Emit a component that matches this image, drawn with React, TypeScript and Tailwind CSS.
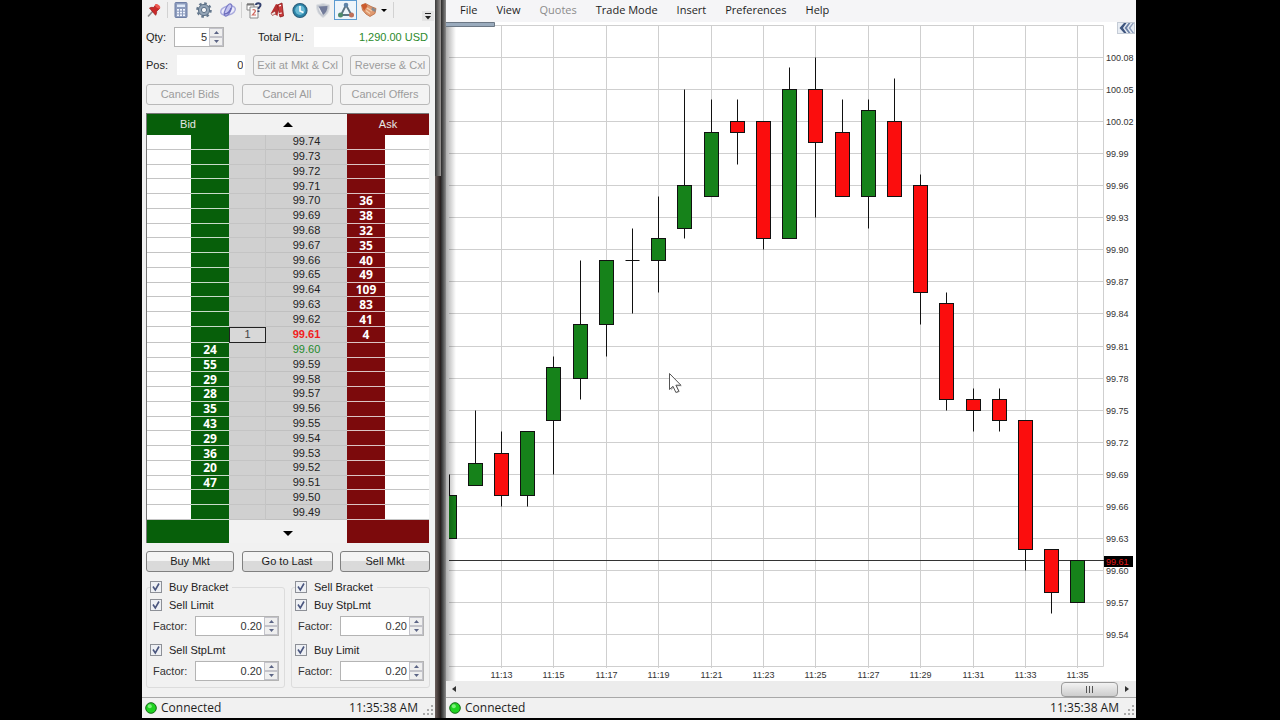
import { ReactNode, useState } from 'react'
import clsx from 'clsx'

type Level = { price: string; bid?: number; ask?: number; working?: number }

const bidSizes: Record<string, number> = {
  '99.60': 24, '99.59': 55, '99.58': 29, '99.57': 28, '99.56': 35,
  '99.55': 43, '99.54': 29, '99.53': 36, '99.52': 20, '99.51': 47,
}
const askSizes: Record<string, number> = {
  '99.70': 36, '99.69': 38, '99.68': 32, '99.67': 35, '99.66': 40,
  '99.65': 49, '99.64': 109, '99.63': 83, '99.62': 41, '99.61': 4,
}

const levels: Level[] = Array.from({ length: 26 }, (_, i) => {
  const price = ((9974 - i) / 100).toFixed(2)
  return { price, bid: bidSizes[price], ask: askSizes[price], working: price === '99.61' ? 1 : undefined }
})

// [minute after 11:00, open, high, low, close] in hundredths
const candles = [
  [11, 9963, 9969, 9963, 9967],
  [12, 9968, 9975, 9968, 9970],
  [13, 9971, 9973, 9966, 9967],
  [14, 9967, 9973, 9966, 9973],
  [15, 9974, 9980, 9969, 9979],
  [16, 9978, 9989, 9976, 9983],
  [17, 9983, 9989, 9980, 9989],
  [18, 9989, 9992, 9984, 9989],
  [19, 9989, 9995, 9986, 9991],
  [20, 9992, 10005, 9991, 9996],
  [21, 9995, 10004, 9995, 10001],
  [22, 10002, 10004, 9998, 10001],
  [23, 10002, 10002, 9990, 9991],
  [24, 9991, 10007, 9991, 10005],
  [25, 10005, 10008, 9993, 10000],
  [26, 10001, 10004, 9995, 9995],
  [27, 9995, 10004, 9992, 10003],
  [28, 10002, 10006, 9995, 9995],
  [29, 9996, 9997, 9983, 9986],
  [30, 9985, 9986, 9975, 9976],
  [31, 9976, 9977, 9973, 9975],
  [32, 9976, 9977, 9973, 9974],
  [33, 9974, 9974, 9960, 9962],
  [34, 9962, 9962, 9956, 9958],
  [35, 9957, 9961, 9957, 9961],
]

const PLOT = { left: 3, right: 658, top: 3, bottom: 644 }
const xOf = (minute: number) => Math.round(55 + (minute - 13) * 26.2) + 0.5
const yOf = (price: number) => Math.round(34.6 + (10008 - price) * 10.7) + 0.5

function Icon({ children }: { children: ReactNode }) {
  return (
    <svg viewBox="0 0 18 18" className="size-[18px]" aria-hidden="true">
      {children}
    </svg>
  )
}

const icons: Record<string, ReactNode> = {
  pin: (
    <Icon>
      <path d="M3 15.500 8 10" stroke="#8b8b8b" strokeWidth="1.600" />
      <path d="M4.500 7c2-1 3-.6 4-.4L11 3.500l4 3.600-3.400 3.200c.2 1.600-.2 2.800-1 4z" fill="#c92a2a" stroke="#a01d1d" strokeWidth=".8" />
      <path d="M10 3.500c1.500-2 6.500 1.500 5 4-1.500 1-5.600-2-5-4z" fill="#ee5a52" />
    </Icon>
  ),
  calculator: (
    <Icon>
      <rect x="3" y="1.500" width="12" height="15" rx="1" fill="#8d9cbd" stroke="#6f7fa6" />
      <rect x="5" y="3.500" width="8" height="2.500" fill="#dfe9f8" />
      {[8, 10.7, 13.4].map((y) =>
        [5, 8, 11].map((x) => <rect key={`${x}-${y}`} x={x} y={y} width="2" height="1.700" fill="#f1f5ff" />),
      )}
    </Icon>
  ),
  gear: (
    <Icon>
      <circle cx="9" cy="9" r="6.600" fill="none" stroke="#65788d" strokeWidth="2.400" strokeDasharray="2.600 2.580" />
      <circle cx="9" cy="9" r="5.600" fill="#93a4b6" stroke="#5c7086" />
      <circle cx="9" cy="9" r="2.600" fill="#f4f5f7" stroke="#5c7086" />
    </Icon>
  ),
  swirl: (
    <Icon>
      <ellipse cx="9" cy="9.500" rx="7.500" ry="4.500" fill="#ececfb" stroke="#a9aadd" strokeWidth="1.500" transform="rotate(-15 9 9.500)" />
      <ellipse cx="9" cy="9" rx="2.600" ry="6.500" fill="#c4c4f0" stroke="#7b7cc6" strokeWidth="1.300" transform="rotate(25 9 9)" />
      <path d="M5 13c3 0 6-2 7-6" fill="none" stroke="#6a6bbb" strokeWidth="1.400" />
    </Icon>
  ),
  calendar: (
    <Icon>
      <path d="M2 3h7v6H2z" fill="#fff" stroke="#888" />
      <path d="M2 2.500h7v2H2z" fill="#777" />
      <path d="M5 6h8v11H5z" fill="#fafafa" stroke="#888" />
      <path d="M7.500 9c2-1 3.500.5 2.500 2l-2.500 3h3.500" fill="none" stroke="#d0685f" strokeWidth="1.200" />
      <path d="M11 4c0-2.500 4.500-2.500 4.500 0S13.500 5.500 13.500 8M13.500 9.500v1.500" fill="none" stroke="#33416e" strokeWidth="2" />
    </Icon>
  ),
  books: (
    <Icon>
      <path d="m3 12 5-9 3 1-1.500 11-3-2z" fill="#b63030" />
      <path d="m9.500 4 4.500-2 1.500 13-3.500 1z" fill="#c93c3c" stroke="#8a1717" strokeWidth=".8" />
      <path d="M3 12.500 7 10l1 2.500-3.500 2z" fill="#f2e3df" stroke="#8a1717" strokeWidth=".6" />
      <path d="m11 5 2-.6M11.300 12.500l2.500-.5" stroke="#fff" strokeWidth="1.200" />
    </Icon>
  ),
  clock: (
    <Icon>
      <circle cx="9" cy="9.500" r="7" fill="#2b84a8" stroke="#2d5f7c" strokeWidth="1.200" />
      <circle cx="9" cy="9.200" r="4.800" fill="#69b9d4" />
      <path d="M9 5v5l3.500 1.500" fill="none" stroke="#fff" strokeWidth="1.600" />
    </Icon>
  ),
  shield: (
    <Icon>
      <path d="M2.500 4 9 2.500 15.500 4c0 6-2 10-6.500 12.500C4.500 14 2.500 10 2.500 4z" fill="#c6cad1" stroke="#dcdfe3" />
      <path d="M4.500 5.500 13.500 5c0 4-1.500 7-4.500 9z" fill="#727b9a" />
      <path d="M4.500 5.500 9 14c-3-2-4.500-5-4.500-8.500z" fill="#e9ebef" />
    </Icon>
  ),
  network: (
    <Icon>
      <path d="M9 4 4 14h10.500z" fill="none" stroke="#5d7483" strokeWidth="1.900" />
      <circle cx="9" cy="4" r="2.300" fill="#5e83a8" />
      <circle cx="3.500" cy="14" r="2.500" fill="#4f8a6a" />
      <circle cx="14.500" cy="14" r="2.500" fill="#c0705a" />
    </Icon>
  ),
  hands: (
    <Icon>
      <path d="m1.500 4 4-1.500 5.500 3 5 2-1 5-5 3-4-2.500-3.500-4z" fill="#e09a70" stroke="#b9673c" strokeWidth=".8" />
      <path d="m1.500 4 4-1.500 2 2.500L4 10z" fill="#cc5a2c" />
      <path d="m7 7 5 3M6 9.500l4 3" stroke="#f6cfae" strokeWidth="1.200" />
      <path d="m12 6 4 2.500-1 2.500-3.500-2z" fill="#85898f" />
    </Icon>
  ),
}

function ToolButton({ name, active }: { name: string; active?: boolean }) {
  return (
    <button
      aria-label={name}
      className={clsx('flex h-5 w-[23px] items-center justify-center border', active ? 'border-[#5c9bd1] bg-[#eef5fb]' : 'border-transparent')}
    >
      {icons[name]}
    </button>
  )
}

function Separator() {
  return <span className="h-4 w-px bg-[#d2d2d2]" />
}

function PushButton({ children, disabled, className }: { children: ReactNode; disabled?: boolean; className?: string }) {
  return (
    <button
      disabled={disabled}
      className={clsx(
        'h-[21px] whitespace-nowrap rounded-[3px] border text-[11px]',
        disabled ? 'border-[#b9b9b9] bg-[#f3f3f3] text-[#9c9c9c]' : 'border-[#808080] bg-linear-to-b from-[#f4f4f4] from-50% to-[#dadada] to-50% text-[#1c1c1c]',
        className,
      )}
    >
      {children}
    </button>
  )
}

function Spinner({ id, initial, className }: { id: string; initial: string; className?: string }) {
  const [value, setValue] = useState(initial)
  const step = initial.includes('.') ? 0.01 : 1
  const bump = (dir: number) => setValue((Number(value) + dir * step).toFixed(step < 1 ? 2 : 0))

  return (
    <div className={clsx('flex h-5 border border-[#b4b4b4] bg-white', className)}>
      <input id={id} value={value} onChange={(e) => setValue(e.target.value)} className="w-0 min-w-0 flex-1 bg-white pr-0.5 text-right text-[11px] leading-4 text-[#333]" />
      <div className="flex w-3.5 flex-col">
        {[1, -1].map((dir) => (
          <button key={dir} aria-label={dir > 0 ? 'Increase' : 'Decrease'} onClick={() => bump(dir)} className="flex flex-1 items-center justify-center border border-[#c3c3ca] bg-[#efefef]">
            <svg viewBox="0 0 5 3" className="h-[3px] w-[5px]">
              <path d={dir > 0 ? 'M0 3 2.500 0 5 3z' : 'M0 0 2.500 3 5 0z'} fill="#5b6485" />
            </svg>
          </button>
        ))}
      </div>
    </div>
  )
}

function Check({ label }: { label: string }) {
  return (
    <label className="flex h-3.5 items-center gap-[7px] text-[11px] leading-[14px] text-[#222]">
      <span className="grid size-3 shrink-0">
        <input type="checkbox" defaultChecked className="peer size-3 appearance-none border border-[#8d9097] bg-[#eef0f4] [grid-area:1/1]" />
        <svg viewBox="0 0 12 12" className="pointer-events-none invisible size-3 [grid-area:1/1] peer-checked:visible">
          <path d="m3 5.500 2.300 3.500L9 2.500" fill="none" stroke="#4a567f" strokeWidth="1.600" />
        </svg>
      </span>
      {label}
    </label>
  )
}

function Factor({ id }: { id: string }) {
  return (
    <div className="mt-1 flex items-center pl-[3px]">
      <label htmlFor={id} className="w-[42px] text-[11px] text-[#333]">Factor:</label>
      <Spinner id={id} initial="0.20" className="w-[84px]" />
    </div>
  )
}

function Bracket({ id, labels }: { id: string; labels: string[] }) {
  return (
    <fieldset className="w-[139px] rounded-[3px] border border-[#dcdcdc] pb-1.5 pl-[3px]">
      <legend className="h-3.5 pr-1"><Check label={labels[0]} /></legend>
      <div className="mt-1"><Check label={labels[1]} /></div>
      <Factor id={`${id}-first`} />
      <div className="mt-[7px]"><Check label={labels[2]} /></div>
      <Factor id={`${id}-second`} />
    </fieldset>
  )
}

function StatusBar() {
  return (
    <footer className="flex h-[21px] items-center border-t border-[#a8a8a8] bg-[#f1f1f1] pl-[3px] font-['Open_Sans','Noto_Sans',sans-serif] text-[12px] leading-4 text-[#1e1e1e]">
      <svg viewBox="0 0 12 12" className="size-3">
        <circle cx="6" cy="6" r="5.300" fill="#1fd321" stroke="#146b16" />
        <circle cx="4.800" cy="4.300" r="2" fill="#7df27a" />
      </svg>
      <span className="ml-1">Connected</span>
      <span className="ml-auto">11:35:38 AM</span>
      <svg viewBox="0 0 12 12" className="ml-1 mr-px mt-1 size-3">
        {[[9, 1], [5, 5], [9, 5], [1, 9], [5, 9], [9, 9]].map(([x, y]) => (
          <rect key={`${x}-${y}`} x={x} y={y} width="2" height="2" fill="#aaa" />
        ))}
      </svg>
    </footer>
  )
}

function Ladder() {
  return (
    <div className="mt-2 pr-px">
      <table className="h-[430px] w-full table-fixed border-separate border-spacing-0 border-l border-t border-[#777] text-center text-[11px] leading-[13px]">
        <colgroup>
          <col className="w-11" />
          <col className="w-[38px]" />
          <col className="w-[37px]" />
          <col />
          <col className="w-[38px]" />
          <col className="w-11" />
        </colgroup>
        <thead>
          <tr className="h-[21px] text-[#e6e6e6]">
            <th colSpan={2} className="bg-[#075f0a] p-0 text-[11px] font-normal">Bid</th>
            <th colSpan={2} className="bg-[#f2f2f2] p-0">
              <button aria-label="Scroll up" className="block w-full">
                <svg viewBox="0 0 10 5" className="mx-auto h-[5px] w-2.5"><path d="M0 5 5 0l5 5z" /></svg>
              </button>
            </th>
            <th colSpan={2} className="bg-[#7c0a0c] p-0 text-[11px] font-normal">Ask</th>
          </tr>
        </thead>
        <tbody>
          {levels.map(({ price, bid, ask, working }) => (
            <tr key={price}>
              <td className="border-b border-[#c4c4c4] bg-white p-0" />
              <td className="border-b border-[#c9dcc9] bg-[#075f0a] p-0 font-['Open_Sans',sans-serif] text-[12px] font-bold text-white">{bid}</td>
              <td className={clsx('p-0 text-[#444]', working ? 'border border-[#222] bg-[#d8d8d8]' : 'border-b border-r border-[#c4c4c4] bg-[#d0d0d0]')}>{working}</td>
              <td
                className={clsx(
                  'border-b border-[#c0c0c0] bg-[#d0d0d0] p-0',
                  price === '99.61' ? 'font-bold text-[#f02020]' : price === '99.60' ? 'text-[#1f8a2b]' : 'text-[#222]',
                )}
              >
                {price}
              </td>
              <td className="border-b border-[#dcc4c4] bg-[#7c0a0c] p-0 font-['Open_Sans',sans-serif] text-[12px] font-bold text-white">{ask}</td>
              <td className="border-b border-[#c4c4c4] bg-white p-0" />
            </tr>
          ))}
        </tbody>
        <tfoot>
          <tr className="h-[23px]">
            <td colSpan={2} className="bg-[#075f0a] p-0" />
            <td colSpan={2} className="bg-[#f2f2f2] p-0 pt-1">
              <button aria-label="Scroll down" className="block w-full">
                <svg viewBox="0 0 10 5" className="mx-auto h-[5px] w-2.5"><path d="m0 0 5 5 5-5z" /></svg>
              </button>
            </td>
            <td colSpan={2} className="bg-[#7c0a0c] p-0" />
          </tr>
        </tfoot>
      </table>
    </div>
  )
}

function OrderTicket() {
  return (
    <section className="flex w-[293px] shrink-0 flex-col bg-[#f1f1f1]">
      <div className="flex h-6 items-start justify-between pr-px">
        <div className="flex h-5 items-center">
          <ToolButton name="pin" />
          <span className="ml-0.5 mr-px flex"><Separator /></span>
          <ToolButton name="calculator" />
          <ToolButton name="gear" />
          <span className="ml-px flex"><ToolButton name="swirl" /></span>
          <span className="ml-0.5 flex"><Separator /></span>
          <ToolButton name="calendar" />
          <ToolButton name="books" />
          <ToolButton name="clock" />
          <ToolButton name="shield" />
          <ToolButton name="network" active />
          <ToolButton name="hands" />
          <button aria-label="More actions" className="pl-px pr-1.5">
            <svg viewBox="0 0 6 3" className="h-[3px] w-1.5"><path d="m0 0 3 3 3-3z" /></svg>
          </button>
          <Separator />
        </div>
        <button aria-label="Toolbar options" className="mt-[11px] h-2.5 w-3 bg-[#e4e4e4]">
          <svg viewBox="0 0 12 10" className="size-full"><path d="M3 2.500h6" stroke="#222" /><path d="m3 5 3 3.500L9 5z" fill="#222" /></svg>
        </button>
      </div>
      <div className="flex flex-1 flex-col pl-1 pr-[5px] pt-[3px]">
        <div className="flex h-5 items-center text-[#222]">
          <label htmlFor="qty" className="w-7 text-[11px]">Qty:</label>
          <Spinner id="qty" initial="5" className="w-[50px]" />
          <label htmlFor="pl" className="ml-auto w-14 text-[11px]">Total P/L:</label>
          <input id="pl" readOnly value="1,290.00 USD" className="h-5 w-[116px] bg-white pr-0.5 text-right text-[11px] text-[#2b8a2b]" />
        </div>
        <div className="mt-2 flex h-[21px] items-center justify-between">
          <label htmlFor="pos" className="w-6 text-[11px] text-[#222]">Pos:</label>
          <input id="pos" readOnly value="0" className="h-5 w-[68px] self-start bg-white pr-0.5 text-right text-[11px] text-[#333]" />
          <PushButton disabled className="w-[90px]">Exit at Mkt &amp; Cxl</PushButton>
          <PushButton disabled className="w-20">Reverse &amp; Cxl</PushButton>
        </div>
        <div className="mt-2 flex justify-between">
          <PushButton disabled className="w-[88px]">Cancel Bids</PushButton>
          <PushButton disabled className="w-[91px]">Cancel All</PushButton>
          <PushButton disabled className="w-[90px]">Cancel Offers</PushButton>
        </div>
        <Ladder />
        <div className="mt-2 flex justify-between">
          <PushButton className="w-[88px]">Buy Mkt</PushButton>
          <PushButton className="w-[91px]">Go to Last</PushButton>
          <PushButton className="w-[90px]">Sell Mkt</PushButton>
        </div>
        <div className="mt-2 flex justify-between pb-2">
          <Bracket id="buy" labels={['Buy Bracket', 'Sell Limit', 'Sell StpLmt']} />
          <Bracket id="sell" labels={['Sell Bracket', 'Buy StpLmt', 'Buy Limit']} />
        </div>
      </div>
      <StatusBar />
    </section>
  )
}

function Chart() {
  const prices = Array.from({ length: 19 }, (_, i) => 10008 - i * 3)
  const minutes = Array.from({ length: 12 }, (_, i) => 13 + i * 2)
  const last = yOf(9961)

  return (
    <svg viewBox="0 0 690 659" className="block w-full bg-white font-['Liberation_Sans',Arial,sans-serif]" role="img" aria-label="One minute candles">
      <defs>
        <clipPath id="plot">
          <rect x={PLOT.left} y={PLOT.top} width={PLOT.right - PLOT.left} height={PLOT.bottom - PLOT.top} />
        </clipPath>
        <linearGradient id="edge">
          <stop offset="0" stopColor="#000" stopOpacity=".32" />
          <stop offset="1" stopColor="#000" stopOpacity="0" />
        </linearGradient>
      </defs>
      <g stroke="#cfcfcf">
        {prices.map((p) => <path key={p} d={`M${PLOT.left} ${yOf(p)}H${PLOT.right}`} />)}
        {minutes.map((m) => <path key={m} d={`M${xOf(m)} ${PLOT.top}V${PLOT.bottom + 2}`} />)}
        <path d={`M${PLOT.left} 3.500H657.500V644.500H${PLOT.left}`} fill="none" />
      </g>
      <path d={`M${PLOT.left} ${last}H${PLOT.right}`} stroke="#333" />
      <g clipPath="url(#plot)">
        {candles.map(([m, open, high, low, close]) => {
          const top = yOf(Math.max(open, close))
          const height = yOf(Math.min(open, close)) - top
          return (
            <g key={m} stroke="#111">
              <path d={`M${xOf(m)} ${yOf(high)}V${yOf(low)}`} />
              {height === 0
                ? <path d={`M${xOf(m) - 7} ${top}h14`} />
                : <rect x={xOf(m) - 7} y={top} width="14" height={height} fill={close > open ? '#16821a' : '#fb0d0d'} />}
            </g>
          )
        })}
      </g>
      <g fontSize="9" fill="#333">
        {prices.map((p) => <text key={p} x="660" y={yOf(p) + 3.5}>{(p / 100).toFixed(2)}</text>)}
        {minutes.map((m) => <text key={m} x={xOf(m)} y="656" textAnchor="middle">{`11:${m}`}</text>)}
        <rect x="658" y={last - 4.5} width="29" height="11" fill="#000" />
        <text x="660" y={last + 4} fill="#e01818">99.61</text>
      </g>
      <rect width="10" height="659" fill="url(#edge)" />
      <path d="M0 .5h48.500v4H0" fill="#9aabbd" stroke="#6c7885" />
      <path d="M225 353.500v15l3.500-3.200 2.700 5.700 2.700-1.300-2.700-5.500h4.800z" fill="#bbb" />
      <path d="M223.500 351.500v16l3.500-3.200 2.900 6.200 2.900-1.300-2.900-6h5z" fill="#fff" stroke="#555" />
    </svg>
  )
}

const menu = ['File', 'View', 'Quotes', 'Trade Mode', 'Insert', 'Preferences', 'Help']

function ChartWindow() {
  return (
    <section className="flex min-w-0 flex-1 flex-col bg-[#f1f1f1]">
      <nav className="flex h-[22px] items-start gap-[19px] bg-[#f5f5f7] pl-3.5 pt-0.5 font-['Open_Sans','Noto_Sans',sans-serif] text-[11px] leading-4 text-[#1e1e1e]">
        {menu.map((item) => (
          <button key={item} disabled={item === 'Quotes'} className="whitespace-nowrap disabled:text-[#8b8b8b]">{item}</button>
        ))}
      </nav>
      <div className="relative">
        <Chart />
        <button aria-label="Collapse panel" className="absolute right-px top-0 h-3 w-[18px] border border-[#c5ccd6] bg-[#e8edf4]">
          <svg viewBox="0 0 16 10" className="size-full">
            <path d="M6 0 1.500 5 6 10h2.500L5 5l3.500-5z" fill="#3f567f" />
            <path d="M10.500 0 6.500 5l4 5h2L9 5l3.500-5z" fill="#6c81a6" />
            <path d="m14.500 0-4 5 4 5H16l-3.500-5L16 0z" fill="#8c9dbc" />
          </svg>
        </button>
      </div>
      <div className="flex h-4 items-center bg-[#ececec]">
        <button aria-label="Scroll left" className="w-4 pl-1.5">
          <svg viewBox="0 0 4 6" className="h-1.5 w-1"><path d="M4 0 0 3l4 3z" fill="#333" /></svg>
        </button>
        <div className="ml-auto flex h-[15px] w-[57px] items-center justify-center gap-px rounded-sm border border-[#9a9a9a] bg-linear-to-b from-[#f2f2f2] to-[#cdcdcd]">
          {[0, 1, 2].map((i) => <span key={i} className="mr-px h-[7px] w-px bg-[#555]" />)}
        </div>
        <button aria-label="Scroll right" className="flex w-[18px] justify-center">
          <svg viewBox="0 0 4 6" className="h-1.5 w-1"><path d="m0 0 4 3-4 3z" fill="#333" /></svg>
        </button>
      </div>
      <StatusBar />
    </section>
  )
}

export default function App() {
  return (
    <div className="min-h-screen bg-black pb-0.5 pl-[142px] pr-36 font-['Liberation_Sans',Arial,sans-serif]">
      <main className="flex">
        <OrderTicket />
        {/* frame between the two windows */}
        <div className="flex w-[11px] shrink-0">
          <div className="flex w-1.5 flex-col">
            <div className="h-44 bg-linear-to-r from-[#3b3b3b] to-[#9a9694]" />
            <div className="flex-1 bg-linear-to-r from-[#6b5f5c] to-[#231c1b]" />
          </div>
          <div className="flex-1 bg-linear-to-r from-[#2a2a2a] to-[#8d8d8d]" />
        </div>
        <ChartWindow />
      </main>
    </div>
  )
}
